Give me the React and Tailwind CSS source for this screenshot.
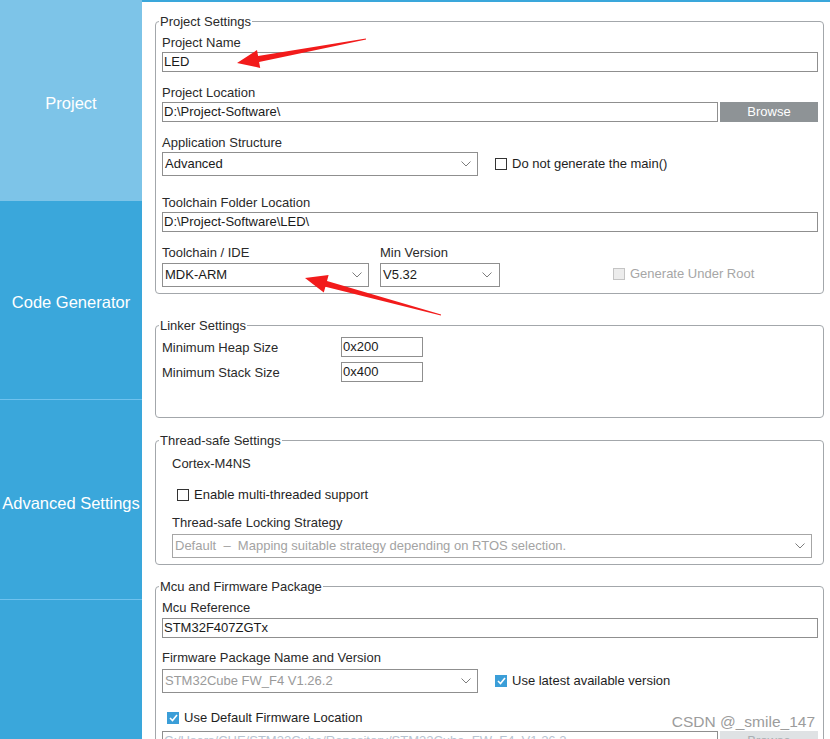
import React from "react";

const Label = ({ children, className = "" }) => (
  <div className={`text-[13px] leading-[15px] text-[#2a2a2a] whitespace-nowrap ${className}`}>{children}</div>
);

const TextInput = ({ value, className = "", disabled }) => (
  <div
    className={`h-[20px] overflow-hidden whitespace-nowrap border border-[#8f8f8f] bg-white pl-[1px] text-[13px] leading-[18px] ${
      disabled ? "text-[#b7c4d1]" : "text-[#1a1a1a]"
    } ${className}`}
  >
    {value}
  </div>
);

const Chevron = () => (
  <svg width="10" height="6" viewBox="0 0 10 6">
    <polyline points="0.5,0.5 5,5 9.5,0.5" fill="none" stroke="#7d7d7d" strokeWidth="1" />
  </svg>
);

const Select = ({ value, className = "", disabled }) => (
  <div
    className={`flex h-[24px] items-center justify-between border border-[#8f8f8f] bg-white pl-[2px] pr-[6px] text-[13px] ${
      disabled ? "text-[#9a9a9a]" : "text-[#1a1a1a]"
    } ${className}`}
  >
    <span className="whitespace-pre">{value}</span>
    <Chevron />
  </div>
);

const Checkbox = ({ checked, disabled }) => {
  if (checked)
    return (
      <span className="flex h-[12px] w-[12px] shrink-0 items-center justify-center bg-[#3b9ed8]">
        <svg width="9" height="8" viewBox="0 0 9 8">
          <polyline points="1,4 3.5,6.5 8,1" fill="none" stroke="white" strokeWidth="1.6" />
        </svg>
      </span>
    );
  return (
    <span
      className={`h-[12px] w-[12px] shrink-0 border ${
        disabled ? "border-[#c4c4c4] bg-[#ececec]" : "border-[#333] bg-white"
      }`}
    />
  );
};

const CheckRow = ({ checked, disabled, label, className = "" }) => (
  <div className={`flex h-[16px] items-center gap-[5px] ${className}`}>
    <Checkbox checked={checked} disabled={disabled} />
    <span className={`whitespace-nowrap text-[13px] ${disabled ? "text-[#a6a6a6]" : "text-[#1e1e1e]"}`}>{label}</span>
  </div>
);

const Group = ({ title, className = "", children }) => (
  <fieldset className={`w-[669px] rounded-[4px] border border-[#a3a7ab] px-0 ${className}`}>
    <legend className="ml-[3px] px-[1px] text-[13px] leading-[15px] text-[#2a2a2a]">{title}</legend>
    {children}
  </fieldset>
);

const tabs = [
  { name: "Project", h: "h-[201px]", pad: "pt-[5px]", active: true },
  { name: "Code Generator", h: "h-[198px]", pad: "pt-[5px]" },
  { name: "Advanced Settings", h: "h-[200px]", pad: "pt-[7px]", line: true },
  { name: "", h: "flex-1", pad: "", line: true },
];

export default function App() {
  return (
    <div className="relative flex h-[739px] w-[830px] overflow-hidden bg-white font-['Liberation_Sans',Arial,sans-serif]">
      <aside className="flex w-[142px] shrink-0 flex-col bg-[#3aa7db]">
        {tabs.map((t, i) => (
          <div
            key={i}
            className={`flex items-center justify-center whitespace-nowrap text-[16.5px] text-white ${t.h} ${t.pad} ${
              t.active ? "bg-[#7dc4e8]" : "bg-[#3aa7db]"
            } ${t.line ? "border-t border-[#6fc2ee]" : ""}`}
          >
            {t.name}
          </div>
        ))}
      </aside>

      <main className="flex-1 border-t-2 border-[#3aa7db] pl-[13px]">
        <Group title="Project Settings" className="mt-[12px]">
          <div className="pb-[6px] pl-[6px] pr-[5px] pt-[6px]">
            <Label>Project Name</Label>
            <TextInput value="LED" className="mt-[2px]" />

            <Label className="mt-[13px]">Project Location</Label>
            <div className="mt-[2px] flex">
              <TextInput value="D:\Project-Software\" className="flex-1" />
              <div className="ml-[2px] flex h-[20px] w-[98px] items-center justify-center bg-[#8e9396] text-[13px] text-white">
                Browse
              </div>
            </div>

            <Label className="mt-[13px]">Application Structure</Label>
            <div className="mt-[2px] flex items-center">
              <Select value="Advanced" className="w-[316px]" />
              <CheckRow label="Do not generate the main()" className="ml-[17px]" />
            </div>

            <Label className="mt-[19px]">Toolchain Folder Location</Label>
            <TextInput value="D:\Project-Software\LED\" className="mt-[2px]" />

            <div className="mt-[13px] flex items-end">
              <div className="w-[207px]">
                <Label>Toolchain / IDE</Label>
                <Select value="MDK-ARM" className="mt-[3px]" />
              </div>
              <div className="ml-[11px] w-[120px]">
                <Label>Min Version</Label>
                <Select value="V5.32" className="mt-[3px] pr-[7px]" />
              </div>
              <CheckRow disabled label="Generate Under Root" className="mb-[5px] ml-[113px]" />
            </div>
          </div>
        </Group>

        <Group title="Linker Settings" className="mt-[24px]">
          <div className="flex flex-col gap-[5px] pb-[35px] pl-[6px] pr-[4px] pt-[4px]">
            <div className="flex items-center">
              <Label className="w-[179px]">Minimum Heap Size</Label>
              <TextInput value="0x200" className="w-[82px]" />
            </div>
            <div className="flex items-center">
              <Label className="w-[179px]">Minimum Stack Size</Label>
              <TextInput value="0x400" className="w-[82px]" />
            </div>
          </div>
        </Group>

        <Group title="Thread-safe Settings" className="mt-[15px]">
          <div className="pb-[6px] pl-[16px] pr-[11px] pt-[8px]">
            <Label>Cortex-M4NS</Label>
            <CheckRow label="Enable multi-threaded support" className="ml-[5px] mt-[16px]" />
            <Label className="mt-[12px]">Thread-safe Locking Strategy</Label>
            <Select
              disabled
              value="Default  –  Mapping suitable strategy depending on RTOS selection."
              className="mt-[4px] border-[#a6a6a6] pr-[5px] !text-[#a3a3a3]"
            />
          </div>
        </Group>

        <Group title="Mcu and Firmware Package" className="mt-[14px]">
          <div className="pb-[6px] pl-[6px] pr-[5px] pt-[6px]">
            <Label>Mcu Reference</Label>
            <TextInput value="STM32F407ZGTx" className="mt-[3px]" />

            <Label className="mt-[12px]">Firmware Package Name and Version</Label>
            <div className="mt-[4px] flex items-center">
              <Select disabled value="STM32Cube FW_F4 V1.26.2" className="w-[316px]" />
              <CheckRow checked label="Use latest available version" className="ml-[17px]" />
            </div>

            <CheckRow checked label="Use Default Firmware Location" className="ml-[5px] mt-[17px]" />
            <div className="mt-[5px] flex">
              <TextInput disabled value="C:/Users/CHE/STM32Cube/Repository/STM32Cube_FW_F4_V1.26.2" className="flex-1" />
              <div className="ml-[2px] flex h-[20px] w-[98px] items-center justify-center bg-[#dfe2e4] text-[13px] text-[#a9aeb2]">
                Browse
              </div>
            </div>
          </div>
        </Group>
      </main>

      <div className="pointer-events-none absolute right-[15px] top-[712px] text-[15.5px] leading-[20px] text-[#9c9c9c]">
        CSDN @_smile_147
      </div>

      <svg className="pointer-events-none absolute left-0 top-0" width="830" height="739" viewBox="0 0 830 739">
        <polygon
          points="237,63 260.2,67.9 259.1,62 366.1,39.5 365.9,38.5 258.1,56 257,50.1"
          fill="#f21b1b"
        />
        <polygon
          points="305,278 328.6,275.1 327,280.9 441.1,314.5 440.9,315.5 325.4,286.7 323.8,292.5"
          fill="#f21b1b"
        />
      </svg>
    </div>
  );
}
